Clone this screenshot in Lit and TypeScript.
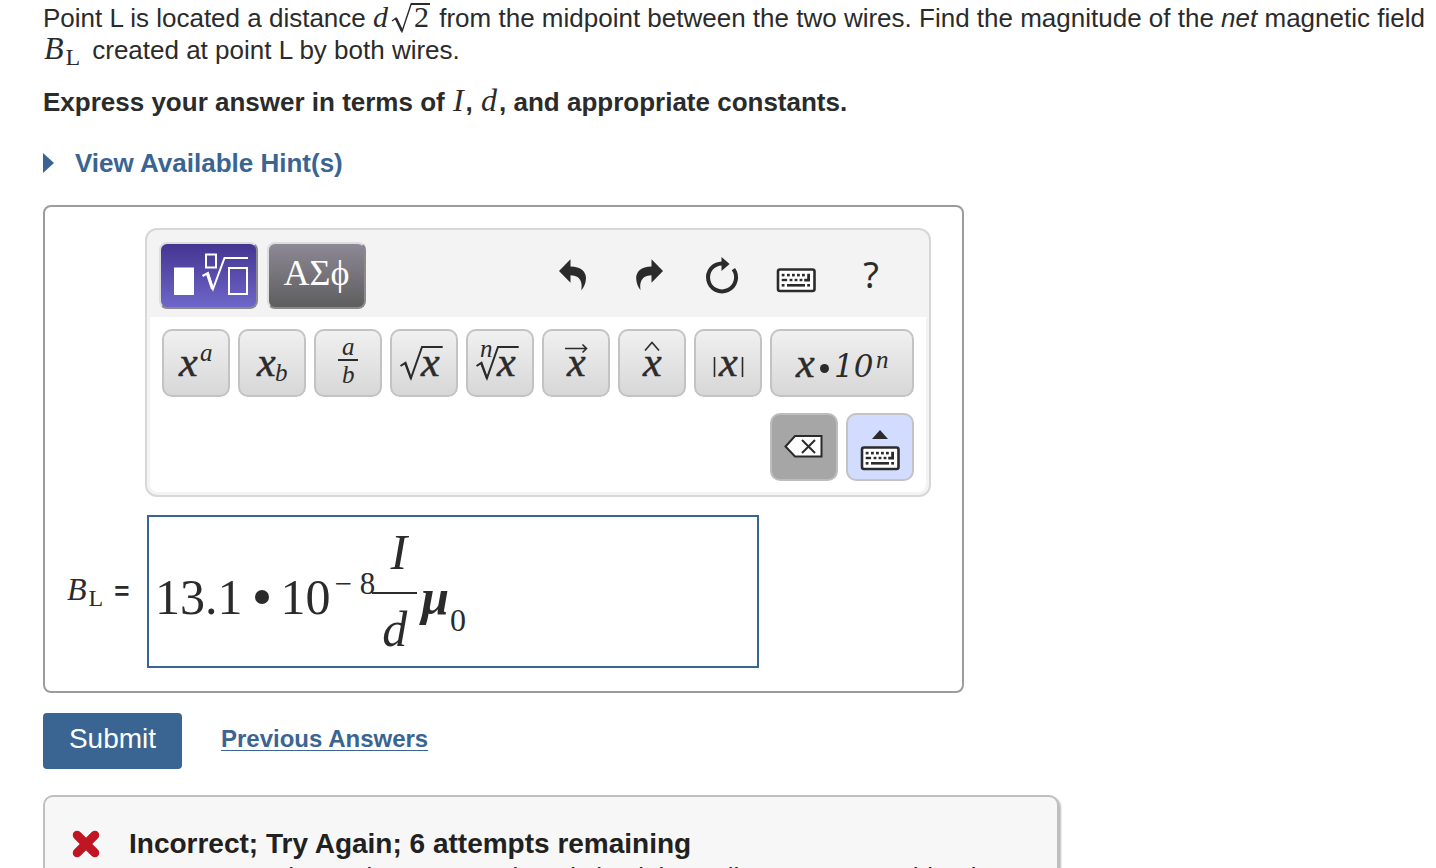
import { LitElement, html, svg, css } from "lit";
import { customElement } from "lit/decorators.js";

const keyboard = svg`
  <rect x="778" y="269.5" width="36.5" height="21.5" rx="2" fill="#fff" stroke="#2b2b2b" stroke-width="2.6"/>
  <g fill="#2b2b2b">
    <rect x="781.7" y="273.8" width="2.8" height="2.6"/><rect x="787" y="273.8" width="2.8" height="2.6"/>
    <rect x="792" y="273.8" width="2.8" height="2.6"/><rect x="797" y="273.8" width="2.8" height="2.6"/>
    <rect x="802" y="273.8" width="2.8" height="2.6"/>
    <path d="M807.2 273.8h2.8v7.6h-5.8v-2.6h3z"/>
    <rect x="781.7" y="278.8" width="5.4" height="2.4"/><rect x="789.6" y="278.8" width="2.8" height="2.4"/>
    <rect x="794.6" y="278.8" width="2.8" height="2.4"/><rect x="799.6" y="278.8" width="2.8" height="2.4"/>
    <rect x="781.7" y="284" width="2.8" height="2.6"/><rect x="787" y="284" width="18" height="2.6"/>
    <rect x="807.2" y="284" width="2.8" height="2.6"/>
  </g>`;

const tools = [
  { label: "Undo", art: svg`<path d="M559 271L570.5 259.3V266.5C581 266.5 586.3 272 586 278.5C585.8 284 583.5 288 581.2 290.3C582.6 284 581.5 275.5 570.5 275.2V282.8Z" fill="#2b2b2b"/>` },
  { label: "Redo", art: svg`<path d="M663 271L651.5 259.3V266.5C641 266.5 635.9 272 636.2 278.5C636.4 284 638.5 288 640.8 290.3C639.4 284 640.5 275.5 651.5 275.2V282.8Z" fill="#2b2b2b"/>` },
  { label: "Reset", art: svg`<path d="M733.4 269.2A14 14 0 1 1 722 263.4" fill="none" stroke="#2b2b2b" stroke-width="4"/><path d="M721.5 257L729.6 264L721.5 271Z" fill="#2b2b2b"/>` },
  { label: "Keyboard shortcuts", art: keyboard },
  { label: "Help", art: svg`<text x="871" y="288" text-anchor="middle" class="help">?</text>` },
];

const templates = [
  { label: "Superscript", art: svg`<text class="v" x="179" y="376">x</text><text class="s" x="200" y="361">a</text>` },
  { label: "Subscript", art: svg`<text class="v" x="257" y="376">x</text><text class="s" x="275" y="381">b</text>` },
  { label: "Fraction", art: svg`<text class="s" x="342" y="355">a</text><path class="l" d="M338 360H358"/><text class="s" x="342" y="383">b</text>` },
  { label: "Square root", art: svg`<path class="l" d="M400.5 366L405.5 362.8L411 378L422 347H442.7"/><path class="l" d="M405 363L411 379"/><text class="v" x="421" y="376">x</text>` },
  { label: "Nth root", art: svg`<path class="l" d="M476.5 366L481.5 362.8L487 378L498 347H518.7"/><path class="l" d="M481 363L487 379"/><text class="v" x="497" y="376">x</text><text class="s" x="480" y="357">n</text>` },
  { label: "Vector", art: svg`<path class="t" d="M565 348.5H586M582.5 344.5L586.5 348.5L582.5 352.5"/><text class="v" x="567" y="376">x</text>` },
  { label: "Unit vector", art: svg`<path class="t" d="M645 350.5L652 342.5L659 350.5"/><text class="v" x="643" y="376">x</text>` },
  { label: "Absolute value", art: svg`<path class="t" d="M714.5 357V377M742.5 357V377"/><text class="v" x="719" y="376">x</text>` },
];

@customElement("app-root")
export class AppRoot extends LitElement {
  static styles = css`
    :host {
      display: block;
      height: 100vh;
      overflow: hidden;
      background: #fff;
      color: #2b2b2b;
      font: 26px/32px "Liberation Sans", Arial, sans-serif;
    }
    * { box-sizing: border-box; }
    .page { padding: 2px 0 0 43px; }
    p { margin: 0; }
    .lead { margin-top: 20px; font-weight: bold; }
    .m { font-family: "Liberation Serif", serif; font-size: 32px; line-height: 1px; font-weight: normal; }
    .m.root { font-size: 30px; margin-right: 2px; }
    .it { font-style: italic; }
    .lead .it { margin: 0 2px 0 1px; }
    .sub { font-size: 24px; position: relative; top: 6px; }
    .gap { margin: 0 12px 0 1px; }
    .gap .sub { margin-left: 2px; }
    .rad { display: inline-block; line-height: 24px; border-top: 2px solid #2b2b2b; padding: 0 1px 0 3px; }
    .sign { width: 21px; height: 31px; margin: 0 -1px 0 3px; vertical-align: -6px; }
    button { font: inherit; color: inherit; padding: 0; margin: 0; border: 0; background: none; display: block; }
    button svg { display: block; }
    .hint { display: flex; align-items: center; margin-top: 29px; gap: 21px; color: #3a6593; font-weight: bold; }
    .panel {
      margin-top: 26px; max-width: 921px; border: 2px solid #9c9c9c; border-radius: 8px;
      padding: 21px 31px 23px 22px;
    }
    .editor { margin-left: 78px; border: 2px solid #d7d7d7; border-radius: 12px; background: #f3f3f3; padding: 0 3px 3px; }
    .bar { display: flex; height: 87px; align-items: center; padding: 4px 16px 0 9px; gap: 9px; }
    .tab {
      width: 99px; height: 67px; border-radius: 8px; border: 2px solid #ddd;
      border-right-color: #8a8a8a; border-bottom-color: #8a8a8a;
      background: linear-gradient(#8f8a97, #5c5c5c) border-box; color: #fff; overflow: hidden;
    }
    .tab.on { background: linear-gradient(#43338f, #6f68cb) border-box; }
    .greek { font: 36px/58px "Liberation Serif", serif; text-align: center; padding-bottom: 5px; }
    .tools { display: flex; margin-left: auto; }
    .keys { background: #fff; border-radius: 0 0 8px 8px; padding: 12px 12px 11px; display: flex; flex-wrap: wrap; gap: 16px 8px; }
    .row { display: flex; gap: 8px; width: 100%; }
    .row.end { justify-content: flex-end; }
    .key {
      width: 68px; height: 68px; border: 2px solid #c3c3c3; border-radius: 10px;
      background: linear-gradient(#f0f0f0, #d7d7d7);
    }
    .key.wide { width: 144px; }
    .key.del { background: #a6a6a6; border-color: #bdbdbd; }
    .key.kb { background: #d2dcff; }
    .v, .s, .o { font-family: "Liberation Serif", serif; font-style: italic; fill: #2b2b2b; }
    .v { font-size: 42px; stroke: #2b2b2b; stroke-width: 0.5; }
    .s { font-size: 25px; }
    .o { font-family: "DejaVu Serif", serif; font-size: 31px; }
    .help { font: 36px "Noto Sans", sans-serif; fill: #2b2b2b; }
    .l { fill: none; stroke: #2b2b2b; stroke-width: 2; }
    .t { fill: none; stroke: #2b2b2b; stroke-width: 1.6; }
    .answer { display: flex; align-items: center; margin-top: 18px; }
    .name { width: 80px; flex: none; font-size: 26px; padding-bottom: 2px; }
    .name .sub { margin-left: 2px; }
    .eq { margin-left: 11px; font-weight: bold; }
    .box {
      width: 612px; height: 153px; border: 2px solid #3a6593; padding: 0 6px; outline: none;
      display: flex; align-items: center; font: 50px/56px "Liberation Serif", serif; white-space: nowrap;
    }
    .dot { width: 14px; height: 14px; border-radius: 50%; background: #2b2b2b; margin: 10px 12px 0 12px; }
    .num { padding-top: 11px; }
    .exp { font-size: 31px; line-height: 36px; margin: -15px 0 0 4px; }
    .frac { display: flex; flex-direction: column; align-items: center; width: 45px; font-style: italic; margin-left: -3px; }
    .frac .top { height: 77px; padding-top: 7px; border-bottom: 2px solid #2b2b2b; width: 100%; text-align: center; padding-left: 8px; }
    .frac .bot { height: 73px; padding-top: 7px; }
    .mu { font-style: italic; font-weight: bold; margin-left: 4px; }
    .zero { font-size: 32px; margin: 56px 0 0 1px; }
    .actions { display: flex; align-items: center; gap: 39px; margin-top: 20px; }
    .submit { width: 139px; height: 56px; border-radius: 4px; background: #3a6593; color: #fff; font-size: 28px; line-height: 52px; padding-bottom: 4px; }
    a { color: #3a6593; font-weight: bold; font-size: 24px; line-height: 28px; text-decoration-thickness: 1px; text-underline-offset: 3px; margin-top: -4px; }
    .feedback {
      margin-top: 26px; max-width: 1016px; border: 2px solid #bfbfbf; border-radius: 10px; background: #f7f7f7;
      box-shadow: 2px 2px 2px #bbb; padding: 31px 28px 28px 27px; color: #212121; display: flex; gap: 29px;
    }
    .feedback svg { flex: none; margin-top: 2px; }
    h2 { margin: 0 0 1px; font-size: 28px; line-height: 32px; }
  `;

  render() {
    return html`<main class="page">
      <p>Point L is located a distance <span class="m root"><span class="it">d</span><svg class="sign" viewBox="0 0 21 31"><path d="M1 19L5 16L11 29.5L20.5 1" fill="none" stroke="#2b2b2b" stroke-width="1.4"/><path d="M5 16.5L11 29" stroke="#2b2b2b" stroke-width="2.6"/></svg><span class="rad">2</span></span> from the midpoint between the two wires. Find the magnitude of the <em>net</em> magnetic field<br>
        <span class="m gap"><span class="it">B</span><span class="sub">L</span></span>created at point L by both wires.</p>
      <p class="lead">Express your answer in terms of <span class="m it">I</span>, <span class="m it">d</span>, and appropriate constants.</p>
      <button class="hint"><svg width="11" height="22" viewBox="0 0 11 22"><path d="M0 1L11 11L0 21Z" fill="#3a6593"/></svg>View Available Hint(s)</button>
      <section class="panel">
        <div class="editor">
          <div class="bar">
            <button class="tab on" aria-label="Templates"><svg width="95" height="63" viewBox="161 244 95 63">
              <path d="M174 267.5h20v27.5h-20z" fill="#fff"/>
              <path d="M206 254.5h10v13h-10zM229 268h18v26h-18zM202.5 276L208 273L213 289L224.5 258H248" fill="none" stroke="#fff" stroke-width="2"/>
              <path d="M207.5 274L212.5 289" stroke="#fff" stroke-width="3"/></svg></button>
            <button class="tab greek">ΑΣϕ</button>
            <div class="tools">${tools.map((t, i) => html`<button aria-label=${t.label}><svg width="75" height="67" viewBox="${535 + i * 75} 242 75 67">${t.art}</svg></button>`)}</div>
          </div>
          <div class="keys">
            <div class="row">
              ${templates.map((t, i) => html`<button class="key" aria-label=${t.label}><svg width="64" height="64" viewBox="${164 + i * 76} 331 64 64">${t.art}</svg></button>`)}
              <button class="key wide" aria-label="Scientific notation"><svg width="140" height="64" viewBox="772 331 140 64">
                <text class="v" x="796" y="377">x</text><circle cx="824.5" cy="368.5" r="4.5" fill="#2b2b2b"/><text class="o" x="834" y="377">10</text><text class="s" x="876" y="368">n</text></svg></button>
            </div>
            <div class="row end">
              <button class="key del" aria-label="Delete"><svg width="64" height="64" viewBox="772 415 64 64"><path d="M785.5 446.5L795 436H821.5V456.5H795Z" fill="#fff" stroke="#2b2b2b" stroke-width="2"/><path d="M802 440L815 453M815 440L802 453" stroke="#2b2b2b" stroke-width="2"/></svg></button>
              <button class="key kb" aria-label="Show keyboard"><svg width="64" height="64" viewBox="848 415 64 64"><path d="M872 439L880 430L888 439Z" fill="#2b2b2b"/><g transform="translate(84 178)">${keyboard}</g></svg></button>
            </div>
          </div>
        </div>
        <div class="answer">
          <span class="name" id="name"><span class="m it">B</span><span class="m sub">L</span><span class="eq">=</span></span>
          <div class="box" role="textbox" tabindex="0" aria-labelledby="name">
            <span class="num">13.1</span><span class="dot"></span><span class="num">10</span><span class="exp">− 8</span>
            <span class="frac"><span class="top">I</span><span class="bot">d</span></span>
            <span class="num mu">μ</span><span class="zero">0</span>
          </div>
        </div>
      </section>
      <div class="actions"><button class="submit">Submit</button><a href="#previous">Previous Answers</a></div>
      <section class="feedback">
        <svg width="28" height="28" viewBox="0 0 28 28"><path d="M4.5 4.5L23.5 23.5M23.5 4.5L4.5 23.5" stroke="#c01623" stroke-width="8.5"/><path d="M5 5L23 23M23 5L5 23" stroke="#c01623" stroke-width="8.5" stroke-linecap="round"/></svg>
        <div><h2>Incorrect; Try Again; 6 attempts remaining</h2>
          <p>You may need to review your work and check how all terms are combined.</p></div>
      </section>
    </main>`;
  }
}
